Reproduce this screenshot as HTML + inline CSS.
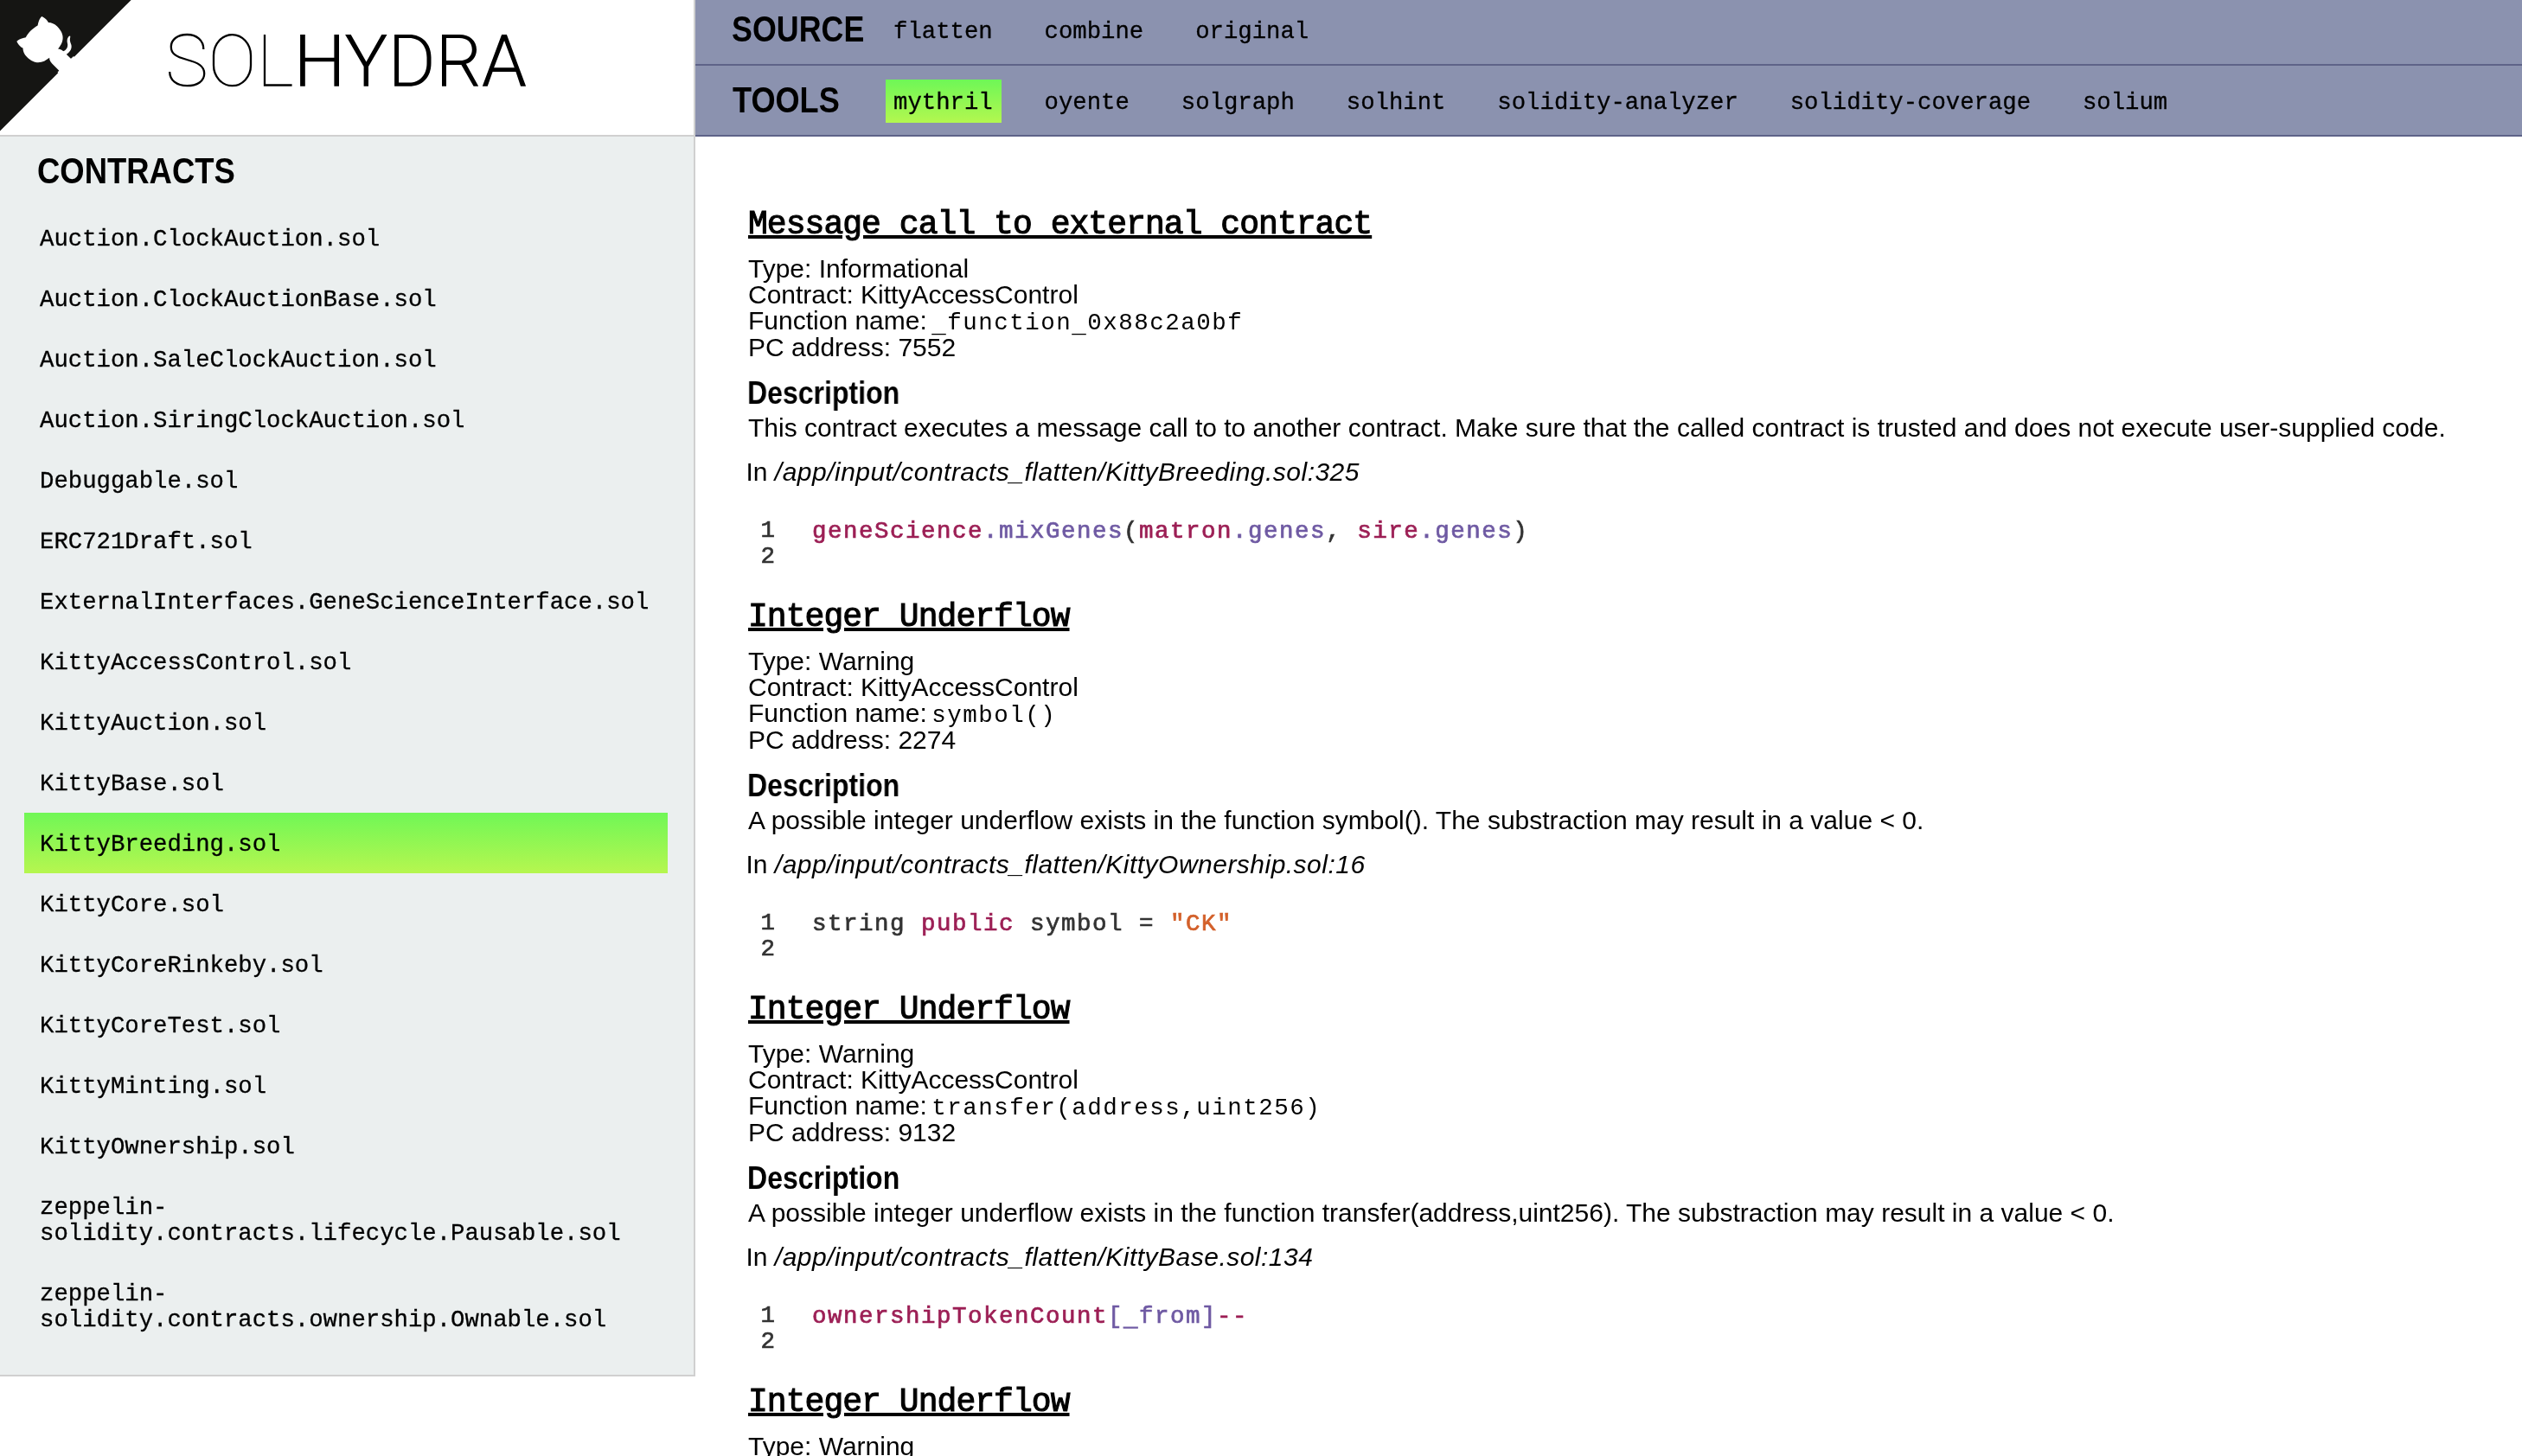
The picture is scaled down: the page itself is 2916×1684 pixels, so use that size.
<!DOCTYPE html><html><head><meta charset="utf-8"><title>SolHydra</title><style>
*{margin:0;padding:0;box-sizing:border-box}
html,body{width:2916px;height:1684px;overflow:hidden;background:#fff;color:#000}
body{position:relative}
.t{position:absolute;white-space:pre}
.s{font-family:"Liberation Sans", sans-serif}
.m{font-family:"Liberation Mono", monospace}
.box{position:absolute}
#wrap{position:absolute;left:0;top:0;width:2916px;height:1684px;will-change:transform;transform-origin:0 0}
@media (max-width:1600px){html,body{width:1458px;height:842px}#wrap{transform:scale(0.5)}}
</style></head><body><div id="wrap"><div class="box" style="left:0;top:0;width:802px;height:156px;background:#fff"></div>
<div class="box" style="left:0;top:156px;width:802px;height:2px;background:#d0d0d0"></div>
<div class="box" style="left:0;top:158px;width:802px;height:1432px;background:#ebefef"></div>
<div class="box" style="left:0;top:1590px;width:804px;height:2px;background:#d0d0d0"></div>
<div class="box" style="left:802px;top:0;width:2px;height:1592px;background:#d0d0d0"></div>
<div class="box" style="left:804px;top:0;width:2112px;height:156px;background:#8b92af"></div>
<div class="box" style="left:804px;top:74px;width:2112px;height:2px;background:#5e6388"></div>
<div class="box" style="left:804px;top:156px;width:2112px;height:2px;background:#5e6388"></div>
<svg class="box" style="left:0;top:0" width="160" height="160" viewBox="0 0 160 160"><path fill="#151513" d="M0,0 L151.6,0 L0,151.6 Z"/><g transform="matrix(1.06,0,0,1.06,-2.33,-6.79)"><g transform="scale(0.608) translate(250,0) scale(-1,1)"><path fill="#fff" d="M128.3,109.0 C113.8,99.7 119.0,89.6 119.0,89.6 C122.0,82.7 120.5,78.6 120.5,78.6 C119.2,72.0 123.4,76.3 123.4,76.3 C127.3,80.9 125.5,87.3 125.5,87.3 C122.9,97.6 130.6,101.9 134.4,103.2"/><path fill="#fff" d="M115.0,115.0 C114.9,115.1 118.7,116.5 119.8,115.4 L133.7,101.6 C136.9,99.2 139.9,98.4 142.2,98.6 C133.8,88.0 127.5,74.4 143.8,58.0 C148.5,53.4 154.0,51.2 159.7,51.0 C160.3,49.4 163.2,43.6 171.4,40.1 C171.4,40.1 176.1,42.5 178.8,56.2 C183.1,58.6 187.2,61.8 190.9,65.4 C194.5,69.0 197.7,73.2 200.1,77.6 C213.8,80.2 216.3,84.9 216.3,84.9 C212.7,93.1 206.9,96.0 205.4,96.6 C205.1,102.4 203.0,107.8 198.3,112.5 C181.9,128.9 168.3,122.5 157.7,114.1 C157.9,116.9 156.7,120.9 152.7,124.9 L141.0,136.5 C139.8,137.7 141.6,141.9 141.8,141.8 Z"/></g></g><path fill="#fff" d="M66.5,83.5 L85,65 L96,76 L77.5,94.5 Z"/></svg>
<svg class="box" style="left:0;top:0" width="700" height="156" viewBox="0 0 700 156">
<g fill="none" stroke="#000" stroke-width="2.3">
<path d="M235.3,57 C235.3,46.5 227.5,40 216.3,40 C205,40 197.8,46 197.8,54 C197.8,62 203,65.5 216,69 C229,72.5 236.2,76.5 236.2,85 C236.2,94 228,99.2 216.3,99.2 C204,99.2 196.2,92.5 196.2,83"/>
<path d="M247,64 C247,50.5 257,40.1 268.5,40.1 C280,40.1 290,50.5 290,64 L290,75.5 C290,89 280,99.2 268.5,99.2 C257,99.2 247,89 247,75.5 Z"/>
<path d="M306,40 L306,98.5 L337.6,98.5"/>
</g>
<g fill="#000" fill-rule="evenodd">
<path d="M347.1,40 h5.7 v26.8 h33.6 v-26.8 h5.6 v59.8 h-5.6 v-28.5 h-33.6 v28.5 h-5.7 Z"/>
<path d="M399.1,39.9 L405.7,39.9 L423.5,71.5 L441.3,39.9 L447.5,39.9 L426,77 L426,99.8 L420.6,99.8 L420.6,77 Z"/>
<path d="M456.1,39.9 L473,39.9 C488.5,39.9 498.5,50.5 498.5,66.5 L498.5,73 C498.5,89.5 488.5,99.8 473,99.8 L456.1,99.8 Z M461.1,43.9 L473,43.9 C485.5,43.9 493.5,53 493.5,66.5 L493.5,73 C493.5,86.5 485.5,95.6 473,95.6 L461.1,95.6 Z"/>
<path d="M511,99.8 L511,39.9 L531,39.9 C543.5,39.9 551,47.2 551,57.4 C551,65.8 545.8,71.8 538.8,73.8 L553.2,99.8 L547.6,99.8 L533.4,74.9 L516,74.9 L516,99.8 Z M516,44.1 L531,44.1 C540.3,44.1 545.8,49.2 545.8,57.4 C545.8,65 540.3,70.1 531,70.1 L516,70.1 Z"/>
<path d="M557.8,99.8 L580.1,39.9 L585.9,39.9 L608.1,99.8 L602,99.8 L596.4,82.9 L569.6,82.9 L563.7,99.8 Z M571.1,78.3 L594.8,78.3 L583.1,46.9 Z"/>
</g></svg>
<div class="t s" style="left:43.00px;top:176.15px;font-size:42.7px;line-height:42.7px;font-weight:700;transform-origin:0 0;transform:scaleX(0.854)">CONTRACTS</div>
<div class="t m" style="left:46.00px;top:263.29px;font-size:27.3px;line-height:27.3px;-webkit-text-stroke:0.3px #000">Auction.ClockAuction.sol</div>
<div class="t m" style="left:46.00px;top:333.29px;font-size:27.3px;line-height:27.3px;-webkit-text-stroke:0.3px #000">Auction.ClockAuctionBase.sol</div>
<div class="t m" style="left:46.00px;top:403.29px;font-size:27.3px;line-height:27.3px;-webkit-text-stroke:0.3px #000">Auction.SaleClockAuction.sol</div>
<div class="t m" style="left:46.00px;top:473.29px;font-size:27.3px;line-height:27.3px;-webkit-text-stroke:0.3px #000">Auction.SiringClockAuction.sol</div>
<div class="t m" style="left:46.00px;top:543.29px;font-size:27.3px;line-height:27.3px;-webkit-text-stroke:0.3px #000">Debuggable.sol</div>
<div class="t m" style="left:46.00px;top:613.29px;font-size:27.3px;line-height:27.3px;-webkit-text-stroke:0.3px #000">ERC721Draft.sol</div>
<div class="t m" style="left:46.00px;top:683.29px;font-size:27.3px;line-height:27.3px;-webkit-text-stroke:0.3px #000">ExternalInterfaces.GeneScienceInterface.sol</div>
<div class="t m" style="left:46.00px;top:753.29px;font-size:27.3px;line-height:27.3px;-webkit-text-stroke:0.3px #000">KittyAccessControl.sol</div>
<div class="t m" style="left:46.00px;top:823.29px;font-size:27.3px;line-height:27.3px;-webkit-text-stroke:0.3px #000">KittyAuction.sol</div>
<div class="t m" style="left:46.00px;top:893.29px;font-size:27.3px;line-height:27.3px;-webkit-text-stroke:0.3px #000">KittyBase.sol</div>
<div class="box" style="left:28px;top:940px;width:744px;height:70px;background:linear-gradient(#70f756,#b6f64f)"></div>
<div class="t m" style="left:46.00px;top:963.29px;font-size:27.3px;line-height:27.3px;-webkit-text-stroke:0.3px #000">KittyBreeding.sol</div>
<div class="t m" style="left:46.00px;top:1033.29px;font-size:27.3px;line-height:27.3px;-webkit-text-stroke:0.3px #000">KittyCore.sol</div>
<div class="t m" style="left:46.00px;top:1103.29px;font-size:27.3px;line-height:27.3px;-webkit-text-stroke:0.3px #000">KittyCoreRinkeby.sol</div>
<div class="t m" style="left:46.00px;top:1173.29px;font-size:27.3px;line-height:27.3px;-webkit-text-stroke:0.3px #000">KittyCoreTest.sol</div>
<div class="t m" style="left:46.00px;top:1243.29px;font-size:27.3px;line-height:27.3px;-webkit-text-stroke:0.3px #000">KittyMinting.sol</div>
<div class="t m" style="left:46.00px;top:1313.29px;font-size:27.3px;line-height:27.3px;-webkit-text-stroke:0.3px #000">KittyOwnership.sol</div>
<div class="t m" style="left:46.00px;top:1381.74px;font-size:27.3px;line-height:30px;-webkit-text-stroke:0.3px #000">zeppelin-
solidity.contracts.lifecycle.Pausable.sol</div>
<div class="t m" style="left:46.00px;top:1481.74px;font-size:27.3px;line-height:30px;-webkit-text-stroke:0.3px #000">zeppelin-
solidity.contracts.ownership.Ownable.sol</div>
<div class="t s" style="left:846.00px;top:13.04px;font-size:42px;line-height:42px;font-weight:700;transform-origin:0 0;transform:scaleX(0.853)">SOURCE</div>
<div class="t s" style="left:847.00px;top:94.84px;font-size:42px;line-height:42px;font-weight:700;transform-origin:0 0;transform:scaleX(0.86)">TOOLS</div>
<div class="t m" style="left:1033.00px;top:23.19px;font-size:27.3px;line-height:27.3px;-webkit-text-stroke:0.3px #000">flatten</div>
<div class="t m" style="left:1207.59px;top:23.19px;font-size:27.3px;line-height:27.3px;-webkit-text-stroke:0.3px #000">combine</div>
<div class="t m" style="left:1382.18px;top:23.19px;font-size:27.3px;line-height:27.3px;-webkit-text-stroke:0.3px #000">original</div>
<div class="box" style="left:1024px;top:92px;width:134px;height:50px;background:linear-gradient(#6ef757,#b3f74f)"></div>
<div class="t m" style="left:1033.00px;top:105.39px;font-size:27.3px;line-height:27.3px;-webkit-text-stroke:0.3px #000">mythril</div>
<div class="t m" style="left:1207.59px;top:105.39px;font-size:27.3px;line-height:27.3px;-webkit-text-stroke:0.3px #000">oyente</div>
<div class="t m" style="left:1365.81px;top:105.39px;font-size:27.3px;line-height:27.3px;-webkit-text-stroke:0.3px #000">solgraph</div>
<div class="t m" style="left:1556.77px;top:105.39px;font-size:27.3px;line-height:27.3px;-webkit-text-stroke:0.3px #000">solhint</div>
<div class="t m" style="left:1731.36px;top:105.39px;font-size:27.3px;line-height:27.3px;-webkit-text-stroke:0.3px #000">solidity-analyzer</div>
<div class="t m" style="left:2069.65px;top:105.39px;font-size:27.3px;line-height:27.3px;-webkit-text-stroke:0.3px #000">solidity-coverage</div>
<div class="t m" style="left:2407.94px;top:105.39px;font-size:27.3px;line-height:27.3px;-webkit-text-stroke:0.3px #000">solium</div>
<div class="t m" style="left:865.00px;top:240.59px;font-size:38px;line-height:38px;font-weight:400;-webkit-text-stroke:1.1px #000;letter-spacing:-0.95px;text-decoration:underline;text-decoration-thickness:4px;text-underline-offset:2px">Message call to external contract</div>
<div class="t s" style="left:865.00px;top:296.40px;font-size:30px;line-height:30px;">Type: Informational</div>
<div class="t s" style="left:865.00px;top:326.20px;font-size:30px;line-height:30px;">Contract: KittyAccessControl</div>
<div class="t s" style="left:865.00px;top:356.40px;font-size:30px;line-height:30px;">Function name: <span class="m" style="margin-left:-3px;font-size:27.5px;letter-spacing:1.5px"><span style="position:relative;top:3px">_</span>function<span style="position:relative;top:3px">_</span>0x88c2a0bf</span></div>
<div class="t s" style="left:865.00px;top:386.60px;font-size:30px;line-height:30px;">PC address: 7552</div>
<div class="t s" style="left:863.50px;top:436.52px;font-size:36px;line-height:36px;font-weight:700;transform-origin:0 0;transform:scaleX(0.89)">Description</div>
<div class="t s" style="left:865.00px;top:479.90px;font-size:30px;line-height:30px;">This contract executes a message call to to another contract. Make sure that the called contract is trusted and does not execute user-supplied code.</div>
<div class="t s" style="left:862.50px;top:530.70px;font-size:30px;line-height:30px;">In <i style="letter-spacing:0.48px">/app/input/contracts_flatten/KittyBreeding.sol:325</i></div>
<div class="t m" style="left:879.50px;top:599.48px;font-size:27.5px;line-height:30px;color:#333;letter-spacing:1.5px;-webkit-text-stroke:0.7px #333">1
2</div>
<div class="t m" style="left:939.00px;top:600.73px;font-size:27.5px;line-height:27.5px;letter-spacing:1.5px;-webkit-text-stroke:0.4px currentColor"><span style="color:#9c1f55;-webkit-text-stroke:0.7px #9c1f55">geneScience</span><span style="color:#6f5aa3;-webkit-text-stroke:0.7px #6f5aa3">.mixGenes</span><span style="color:#333;-webkit-text-stroke:0.7px #333">(</span><span style="color:#9c1f55;-webkit-text-stroke:0.7px #9c1f55">matron</span><span style="color:#6f5aa3;-webkit-text-stroke:0.7px #6f5aa3">.genes</span><span style="color:#333;-webkit-text-stroke:0.7px #333">, </span><span style="color:#9c1f55;-webkit-text-stroke:0.7px #9c1f55">sire</span><span style="color:#6f5aa3;-webkit-text-stroke:0.7px #6f5aa3">.genes</span><span style="color:#333;-webkit-text-stroke:0.7px #333">)</span></div>
<div class="t m" style="left:865.00px;top:694.59px;font-size:38px;line-height:38px;font-weight:400;-webkit-text-stroke:1.1px #000;letter-spacing:-0.95px;text-decoration:underline;text-decoration-thickness:4px;text-underline-offset:2px">Integer Underflow</div>
<div class="t s" style="left:865.00px;top:750.40px;font-size:30px;line-height:30px;">Type: Warning</div>
<div class="t s" style="left:865.00px;top:780.20px;font-size:30px;line-height:30px;">Contract: KittyAccessControl</div>
<div class="t s" style="left:865.00px;top:810.40px;font-size:30px;line-height:30px;">Function name: <span class="m" style="margin-left:-3px;font-size:27.5px;letter-spacing:1.5px">symbol()</span></div>
<div class="t s" style="left:865.00px;top:840.60px;font-size:30px;line-height:30px;">PC address: 2274</div>
<div class="t s" style="left:863.50px;top:890.52px;font-size:36px;line-height:36px;font-weight:700;transform-origin:0 0;transform:scaleX(0.89)">Description</div>
<div class="t s" style="left:865.00px;top:933.90px;font-size:30px;line-height:30px;">A possible integer underflow exists in the function symbol(). The substraction may result in a value &lt; 0.</div>
<div class="t s" style="left:862.50px;top:984.70px;font-size:30px;line-height:30px;">In <i style="letter-spacing:0.48px">/app/input/contracts_flatten/KittyOwnership.sol:16</i></div>
<div class="t m" style="left:879.50px;top:1053.48px;font-size:27.5px;line-height:30px;color:#333;letter-spacing:1.5px;-webkit-text-stroke:0.7px #333">1
2</div>
<div class="t m" style="left:939.00px;top:1054.73px;font-size:27.5px;line-height:27.5px;letter-spacing:1.5px;-webkit-text-stroke:0.4px currentColor"><span style="color:#333;-webkit-text-stroke:0.7px #333">string </span><span style="color:#9c1f55;-webkit-text-stroke:0.7px #9c1f55">public</span><span style="color:#333;-webkit-text-stroke:0.7px #333"> symbol = </span><span style="color:#d3602a;-webkit-text-stroke:0.7px #d3602a">&quot;CK&quot;</span></div>
<div class="t m" style="left:865.00px;top:1148.59px;font-size:38px;line-height:38px;font-weight:400;-webkit-text-stroke:1.1px #000;letter-spacing:-0.95px;text-decoration:underline;text-decoration-thickness:4px;text-underline-offset:2px">Integer Underflow</div>
<div class="t s" style="left:865.00px;top:1204.40px;font-size:30px;line-height:30px;">Type: Warning</div>
<div class="t s" style="left:865.00px;top:1234.20px;font-size:30px;line-height:30px;">Contract: KittyAccessControl</div>
<div class="t s" style="left:865.00px;top:1264.40px;font-size:30px;line-height:30px;">Function name: <span class="m" style="margin-left:-3px;font-size:27.5px;letter-spacing:1.5px">transfer(address,uint256)</span></div>
<div class="t s" style="left:865.00px;top:1294.60px;font-size:30px;line-height:30px;">PC address: 9132</div>
<div class="t s" style="left:863.50px;top:1344.52px;font-size:36px;line-height:36px;font-weight:700;transform-origin:0 0;transform:scaleX(0.89)">Description</div>
<div class="t s" style="left:865.00px;top:1387.90px;font-size:30px;line-height:30px;">A possible integer underflow exists in the function transfer(address,uint256). The substraction may result in a value &lt; 0.</div>
<div class="t s" style="left:862.50px;top:1438.70px;font-size:30px;line-height:30px;">In <i style="letter-spacing:0.48px">/app/input/contracts_flatten/KittyBase.sol:134</i></div>
<div class="t m" style="left:879.50px;top:1507.48px;font-size:27.5px;line-height:30px;color:#333;letter-spacing:1.5px;-webkit-text-stroke:0.7px #333">1
2</div>
<div class="t m" style="left:939.00px;top:1508.73px;font-size:27.5px;line-height:27.5px;letter-spacing:1.5px;-webkit-text-stroke:0.4px currentColor"><span style="color:#9c1f55;-webkit-text-stroke:0.7px #9c1f55">ownershipTokenCount</span><span style="color:#6f5aa3;-webkit-text-stroke:0.7px #6f5aa3">[<span style="position:relative;top:3px">_</span>from]</span><span style="color:#9c1f55;-webkit-text-stroke:0.7px #9c1f55">--</span></div>
<div class="t m" style="left:865.00px;top:1602.59px;font-size:38px;line-height:38px;font-weight:400;-webkit-text-stroke:1.1px #000;letter-spacing:-0.95px;text-decoration:underline;text-decoration-thickness:4px;text-underline-offset:2px">Integer Underflow</div>
<div class="t s" style="left:865.00px;top:1658.40px;font-size:30px;line-height:30px;">Type: Warning</div>
<div class="t s" style="left:865.00px;top:1688.20px;font-size:30px;line-height:30px;">Contract: KittyAccessControl</div>
<div class="t s" style="left:865.00px;top:1718.40px;font-size:30px;line-height:30px;">Function name: <span class="m" style="margin-left:-3px;font-size:27.5px;letter-spacing:1.5px">transfer(address,uint256)</span></div>
<div class="t s" style="left:865.00px;top:1748.60px;font-size:30px;line-height:30px;">PC address: 0000</div>
<div class="t s" style="left:863.50px;top:1798.52px;font-size:36px;line-height:36px;font-weight:700;transform-origin:0 0;transform:scaleX(0.89)">Description</div>
<div class="t s" style="left:865.00px;top:1841.90px;font-size:30px;line-height:30px;"></div>
<div class="t s" style="left:862.50px;top:1892.70px;font-size:30px;line-height:30px;">In <i style="letter-spacing:0.48px"></i></div></div></body></html>
